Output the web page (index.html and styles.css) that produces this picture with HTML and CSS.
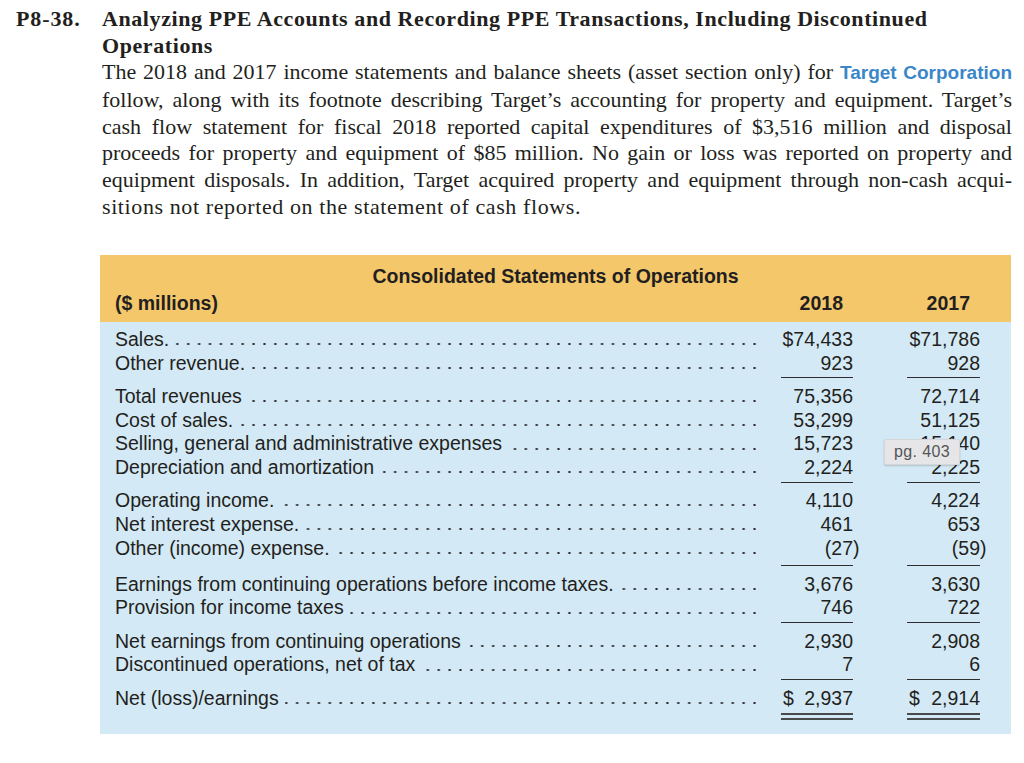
FILE: index.html
```html
<!DOCTYPE html>
<html lang="en">
<head>
<meta charset="utf-8">
<title>P8-38</title>
<link rel="stylesheet" href="styles.css">
</head>
<body>
<div class="problem">
  <div class="pnum">P8-38.</div>
  <div class="content">
    <h1 class="title">Analyzing PPE Accounts and Recording PPE Transactions, Including Discontinued<br>Operations</h1>
    <p class="intro">
      <span class="ln">The 2018 and 2017 income statements and balance sheets (asset section only) for <span class="co">Target Corporation</span></span>
      <span class="ln">follow, along with its footnote describing Target’s accounting for property and equipment. Target’s</span>
      <span class="ln">cash flow statement for fiscal 2018 reported capital expenditures of $3,516 million and disposal</span>
      <span class="ln">proceeds for property and equipment of $85 million. No gain or loss was reported on property and</span>
      <span class="ln">equipment disposals. In addition, Target acquired property and equipment through non-cash acqui-</span>
      <span class="ln last">sitions not reported on the statement of cash flows.</span>
    </p>

    <div class="stmt">
      <div class="stmt-head">
        <div class="stmt-title">Consolidated Statements of Operations</div>
        <div class="row colhead">
          <div class="lbl">($ millions)</div>
          <div class="num c1">2018</div>
          <div class="num c2">2017</div>
        </div>
      </div>
      <div class="stmt-body">
        <div class="grp">
          <div class="row"><div class="lbl lead"><span>Sales.</span></div><div class="num c1">$74,433</div><div class="num c2">$71,786</div></div>
          <div class="row ul"><div class="lbl lead"><span>Other revenue.</span></div><div class="num c1">923</div><div class="num c2">928</div></div>
        </div>
        <div class="grp">
          <div class="row"><div class="lbl lead"><span>Total revenues</span></div><div class="num c1">75,356</div><div class="num c2">72,714</div></div>
          <div class="row"><div class="lbl lead"><span>Cost of sales.</span></div><div class="num c1">53,299</div><div class="num c2">51,125</div></div>
          <div class="row"><div class="lbl lead"><span>Selling, general and administrative expenses</span></div><div class="num c1">15,723</div><div class="num c2">15,140</div></div>
          <div class="row ul"><div class="lbl lead"><span>Depreciation and amortization</span></div><div class="num c1">2,224</div><div class="num c2">2,225</div></div>
        </div>
        <div class="grp">
          <div class="row"><div class="lbl lead"><span>Operating income.</span></div><div class="num c1">4,110</div><div class="num c2">4,224</div></div>
          <div class="row"><div class="lbl lead"><span>Net interest expense.</span></div><div class="num c1">461</div><div class="num c2">653</div></div>
          <div class="row ul ul-lo"><div class="lbl lead"><span>Other (income) expense.</span></div><div class="num c1">(27<span class="rp">)</span></div><div class="num c2">(59<span class="rp">)</span></div></div>
        </div>
        <div class="grp">
          <div class="row"><div class="lbl lead"><span>Earnings from continuing operations before income taxes.</span></div><div class="num c1">3,676</div><div class="num c2">3,630</div></div>
          <div class="row ul"><div class="lbl lead"><span>Provision for income taxes</span></div><div class="num c1">746</div><div class="num c2">722</div></div>
        </div>
        <div class="grp">
          <div class="row"><div class="lbl lead"><span>Net earnings from continuing operations</span></div><div class="num c1">2,930</div><div class="num c2">2,908</div></div>
          <div class="row ul"><div class="lbl lead"><span>Discontinued operations, net of tax</span></div><div class="num c1">7</div><div class="num c2">6</div></div>
        </div>
        <div class="grp">
          <div class="row dbl"><div class="lbl lead"><span>Net (loss)/earnings</span></div><div class="num c1 cur"><span>$</span><span>2,937</span></div><div class="num c2 cur"><span>$</span><span>2,914</span></div></div>
        </div>
      </div>
      <div class="badge">pg. 403</div>
    </div>
  </div>
</div>
</body>
</html>
```

FILE: styles.css
```css
html, body {
  margin: 0;
  padding: 0;
  background: #ffffff;
}

body {
  width: 1024px;
  font-family: "Liberation Serif", "Times New Roman", serif;
  color: #231f20;
}

.problem {
  display: flex;
  padding: 5px 12px 0 16px;
}

.pnum {
  width: 86px;
  flex: none;
  font-weight: bold;
  font-size: 22px;
  letter-spacing: 0.9px;
  line-height: 27px;
}

.content {
  flex: 1;
  min-width: 0;
}

.title {
  margin: 0;
  font-size: 22px;
  font-weight: bold;
  letter-spacing: 0.58px;
  line-height: 27px;
}

.intro {
  margin: 0;
  font-size: 22px;
  line-height: 26.8px;
}

.ln {
  display: block;
  white-space: nowrap;
  text-align: justify;
  text-align-last: justify;
}

.ln.last {
  text-align-last: left;
  letter-spacing: 0.6px;
}

.co {
  font-family: "Liberation Sans", Arial, sans-serif;
  font-weight: bold;
  color: #3a86c9;
  font-size: 19px;
  letter-spacing: 0;
}

/* statement */
.stmt {
  position: relative;
  margin: 34px 0 0 -2px;
  width: 911px;
  font-family: "Liberation Sans", Arial, sans-serif;
  font-size: 19.5px;
  color: #231f20;
}

.stmt-head {
  background: #f4c76b;
  padding: 10px 31px 8px 15px;
}

.stmt-title {
  text-align: center;
  font-weight: bold;
  line-height: 22px;
  padding-left: 16px;
}

.row {
  display: flex;
  align-items: flex-start;
  line-height: 23.7px;
}

.colhead {
  margin-top: 5px;
  line-height: 22px;
  font-weight: bold;
}

.colhead .num {
  text-align: right;
  padding-right: 10px;
  box-sizing: border-box;
}

.lbl {
  flex: 1;
  min-width: 0;
  white-space: nowrap;
  overflow: hidden;
}

.lead {
  background-image: radial-gradient(circle at 50% 50%, #2b2b2b 0, #2b2b2b 0.9px, rgba(43,43,43,0) 1.4px);
  background-size: 10.9px 4px;
  background-repeat: repeat-x;
  background-position: right -3px top 14.3px;
}

.lead span {
  background: #d3e9f5;
  padding-right: 6px;
}

.num {
  flex: none;
  text-align: right;
  white-space: nowrap;
}

.c1 {
  width: 72px;
  margin-left: 24px;
}

.c2 {
  width: 73px;
  margin-left: 54px;
}

.rp {
  margin-right: -0.333em;
}

.stmt-body {
  background: #d3e9f5;
  padding: 6.15px 31px 13.5px 15px;
}

.grp + .grp {
  margin-top: 6.5px;
}

.ul .num {
  padding-bottom: 2px;
  border-bottom: 1px solid #2f2f2f;
}

.ul.ul-lo .num {
  padding-bottom: 5px;
}

.dbl .num {
  padding-bottom: 3px;
  border-bottom: 7px double #4a4a4a;
}

.cur {
  display: flex;
  justify-content: space-between;
  padding-left: 2px;
  box-sizing: border-box;
}

.badge {
  position: absolute;
  left: 784px;
  top: 184px;
  width: 76px;
  height: 26px;
  box-sizing: border-box;
  background: #e6e6e8;
  border: 1px solid #d6d6d8;
  border-radius: 2px;
  box-shadow: 0 1px 2px rgba(0, 0, 0, 0.18);
  font-size: 16px;
  line-height: 24px;
  color: #555555;
  text-align: center;
  letter-spacing: 0.4px;
}
```
